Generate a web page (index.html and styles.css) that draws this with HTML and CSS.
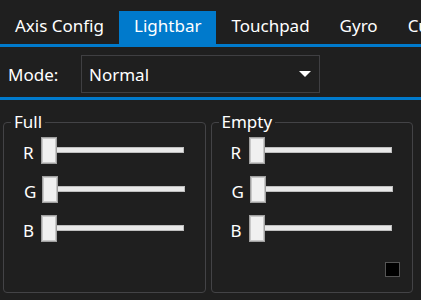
FILE: index.html
```html
<!DOCTYPE html>
<html lang="en">

<head>
    <meta charset="UTF-8">
    <meta name="viewport" content="width=device-width, initial-scale=1.0">
    <title>Lightbar</title>

    <link rel="stylesheet" href="styles.css">
</head>

<body>
    <nav class="tabs">
        <span class="tab">Axis Config</span>
        <span class="tab active">Lightbar</span>
        <span class="tab">Touchpad</span>
        <span class="tab">Gyro</span>
        <span class="tab">Curves</span>
    </nav>

    <div class="mode-row">
        <span class="mode-label">Mode:</span>
        <div class="combo">
            <span>Normal</span>
            <span class="arrow"></span>
        </div>
    </div>

    <main class="groups">
        <fieldset class="group">
            <legend>Full</legend>
            <div class="row">
                <span class="channel">R</span>
                <div class="slider"><div class="track"></div><div class="thumb"></div></div>
            </div>
            <div class="row shift">
                <span class="channel">G</span>
                <div class="slider"><div class="track"></div><div class="thumb"></div></div>
            </div>
            <div class="row">
                <span class="channel">B</span>
                <div class="slider"><div class="track"></div><div class="thumb"></div></div>
            </div>
        </fieldset>

        <fieldset class="group">
            <legend>Empty</legend>
            <div class="row">
                <span class="channel">R</span>
                <div class="slider"><div class="track"></div><div class="thumb"></div></div>
            </div>
            <div class="row shift">
                <span class="channel">G</span>
                <div class="slider"><div class="track"></div><div class="thumb"></div></div>
            </div>
            <div class="row">
                <span class="channel">B</span>
                <div class="slider"><div class="track"></div><div class="thumb"></div></div>
            </div>
            <div class="swatch-row">
                <span class="swatch"></span>
            </div>
        </fieldset>
    </main>
</body>

</html>
```

FILE: styles.css
```css
* {
    box-sizing: border-box;
    margin: 0;
    font-family: "Noto Sans", "Open Sans", sans-serif;
}

body {
    background: rgb(31, 31, 31);
    color: white;
    width: 421px;
    height: 300px;
    overflow: hidden;
    font-size: 17px;
}

.tabs {
    display: flex;
    white-space: nowrap;
    overflow: hidden;
    padding-top: 11px;
    height: 47px;
    border-bottom: 3px solid rgb(0, 122, 204);
}

.tab {
    height: 33px;
    line-height: 30px;
    padding: 0 15px 0 15px;
    margin-bottom: 1px;
}

.tab.active {
    background: rgb(0, 122, 204);
}

.mode-row {
    display: flex;
    align-items: center;
    height: 53px;
    padding: 4px 8px 0 8px;
    border-bottom: 3px solid rgb(0, 122, 204);
}

.mode-label {
    width: 73px;
}

.combo {
    display: flex;
    align-items: center;
    justify-content: space-between;
    width: 239px;
    height: 38px;
    border: 1px solid rgb(63, 63, 66);
    padding: 0 8px 0 7px;
}

.arrow {
    width: 0;
    height: 0;
    border-left: 6px solid transparent;
    border-right: 6px solid transparent;
    border-top: 6px solid white;
}

.groups {
    display: flex;
    gap: 5px;
    padding: 11px 8px 7px 3px;
}

.group {
    flex: 1;
    height: 182px;
    border: 1px solid rgb(67, 67, 70);
    border-radius: 4px;
    padding: 4px 0 0 19px;
    min-width: 0;
}

.group legend {
    margin-left: -12px;
    padding: 0 3px;
    line-height: 22px;
}

.row {
    display: flex;
    height: 27px;
    margin-bottom: 12px;
}

.row.shift {
    padding-left: 1px;
}

.channel {
    width: 18px;
    padding-top: 5px;
    line-height: 22px;
}

.slider {
    position: relative;
    width: 143px;
    height: 27px;
}

.track {
    position: absolute;
    left: 0;
    right: 0;
    top: 10px;
    height: 6px;
    background: rgb(232, 232, 232);
    border: 1px solid rgb(190, 190, 190);
}

.thumb {
    position: absolute;
    left: 0;
    top: 0;
    width: 16px;
    height: 27px;
    background: rgb(240, 240, 240);
    border: 1px solid rgb(160, 160, 160);
    box-shadow: inset 0 0 0 1px rgb(200, 200, 200);
}

.swatch-row {
    display: flex;
    justify-content: flex-end;
    padding-right: 12px;
    margin-top: 20px;
}

.swatch {
    width: 15px;
    height: 15px;
    background: black;
    border: 1px solid rgb(85, 85, 85);
}
```
